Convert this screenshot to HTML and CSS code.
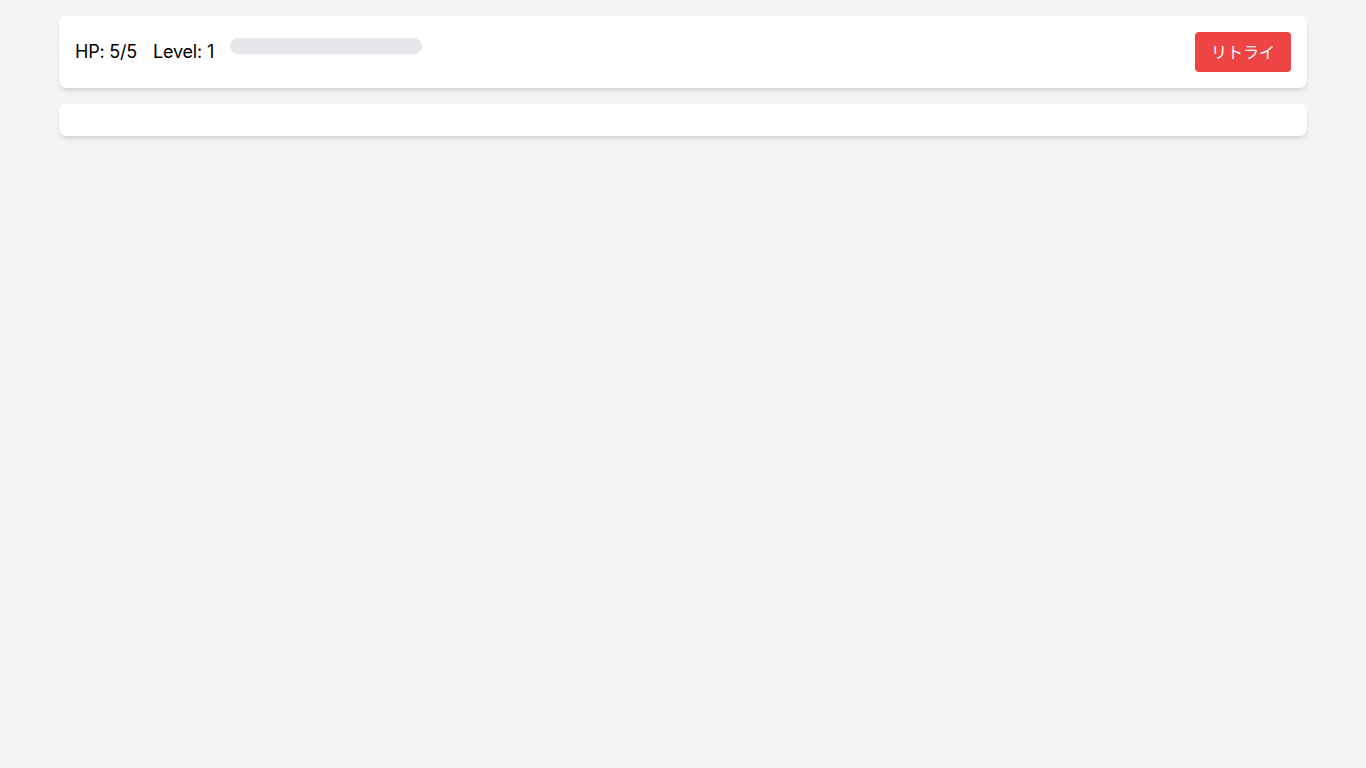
FILE: index.html
```html
<!DOCTYPE html>
<html lang="ja">
<head>
<meta charset="utf-8">
<title>Game</title>
<link rel="stylesheet" href="styles.css">
</head>
<body>
<div class="container">
  <div class="card header">
    <div class="stats">
      <span class="stat">HP: 5/5</span>
      <span class="stat">Level: 1</span>
      <div class="bar-wrap"><div class="bar"></div></div>
    </div>
    <button class="retry">リトライ</button>
  </div>
  <div class="card board"></div>
</div>
</body>
</html>
```
FILE: styles.css
```css
* { box-sizing: border-box; }
html, body {
  margin: 0;
  padding: 0;
  background: #f3f4f6;
  font-family: Inter, "Noto Sans CJK JP", sans-serif;
  color: #000;
}
.container {
  max-width: 1280px;
  margin: 0 auto;
  padding: 16px;
  display: flex;
  flex-direction: column;
  gap: 16px;
}
.card {
  background: #fff;
  border-radius: 8px;
  box-shadow: 0 4px 6px -1px rgba(0,0,0,0.1), 0 2px 4px -2px rgba(0,0,0,0.1);
  padding: 16px;
}
.header {
  display: flex;
  align-items: center;
  justify-content: space-between;
}
.stats {
  display: flex;
  align-items: center;
  gap: 16px;
  font-size: 18px;
  line-height: 28px;
}
.stat {
  letter-spacing: -0.2px;
}
.bar-wrap {
  width: 192px;
  height: 28px;
  display: flex;
  flex-direction: column;
}
.bar {
  width: 192px;
  height: 16px;
  background: #e5e7eb;
  border-radius: 9999px;
}
.retry {
  background: #ef4444;
  color: #fff;
  border: none;
  border-radius: 4px;
  padding: 8px 16px;
  font-family: Inter, "Noto Sans CJK JP", sans-serif;
  font-size: 16px;
  line-height: 24px;
  cursor: pointer;
}
.board {
  min-height: 32px;
}
```
